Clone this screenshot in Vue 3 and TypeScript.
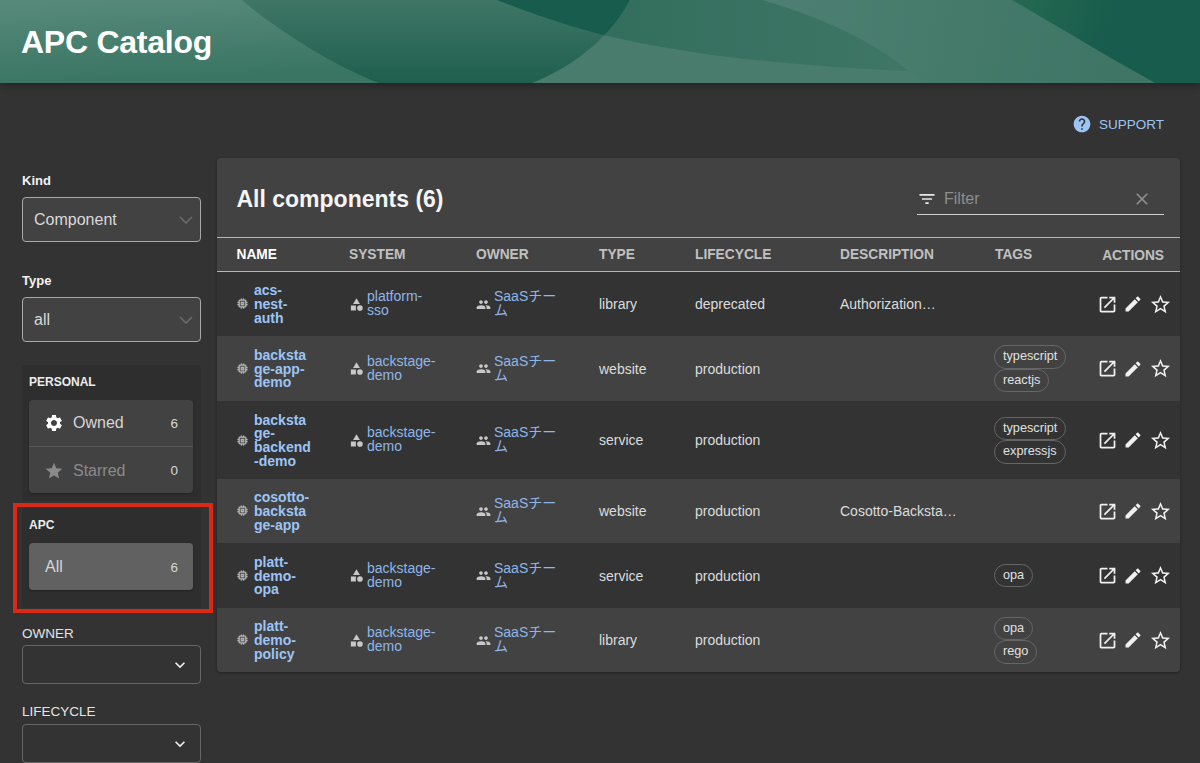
<script setup lang="ts">
const icons = {
  help: 'M12 2C6.48 2 2 6.48 2 12s4.48 10 10 10 10-4.48 10-10S17.52 2 12 2zm1 17h-2v-2h2v2zm2.07-7.75l-.9.92C13.45 12.9 13 13.5 13 15h-2v-.5c0-1.1.45-2.1 1.17-2.83l1.24-1.26c.37-.36.59-.86.59-1.41 0-1.1-.9-2-2-2s-2 .9-2 2H8c0-2.21 1.79-4 4-4s4 1.79 4 4c0 .88-.36 1.68-.93 2.25z',
  filter: 'M10 18h4v-2h-4v2zM3 6v2h18V6H3zm3 7h12v-2H6v2z',
  clear: 'M19 6.41L17.59 5 12 10.59 6.41 5 5 6.41 10.59 12 5 17.59 6.41 19 12 13.41 17.59 19 19 17.59 13.41 12z',
  gear: 'M19.14 12.94c.04-.3.06-.61.06-.94 0-.32-.02-.64-.07-.94l2.03-1.58c.18-.14.23-.41.12-.61l-1.92-3.32c-.12-.22-.37-.29-.59-.22l-2.39.96c-.5-.38-1.03-.7-1.62-.94l-.36-2.54c-.04-.24-.24-.41-.48-.41h-3.84c-.24 0-.43.17-.47.41l-.36 2.54c-.59.24-1.13.57-1.62.94l-2.39-.96c-.22-.08-.47 0-.59.22L2.74 8.87c-.12.21-.08.47.12.61l2.03 1.58c-.05.3-.09.63-.09.94s.02.64.07.94l-2.03 1.58c-.18.14-.23.41-.12.61l1.92 3.32c.12.22.37.29.59.22l2.39-.96c.5.38 1.03.7 1.62.94l.36 2.54c.05.24.24.41.48.41h3.84c.24 0 .44-.17.47-.41l.36-2.54c.59-.24 1.13-.56 1.62-.94l2.39.96c.22.08.47 0 .59-.22l1.92-3.32c.12-.22.07-.47-.12-.61l-2.01-1.58zM12 15.6c-1.98 0-3.6-1.62-3.6-3.6s1.62-3.6 3.6-3.6 3.6 1.62 3.6 3.6-1.62 3.6-3.6 3.6z',
  star: 'M12 17.27L18.18 21l-1.64-7.03L22 9.24l-7.19-.61L12 2 9.19 8.63 2 9.24l5.46 4.73L5.82 21z',
  starBorder: 'M22 9.24l-7.19-.62L12 2 9.19 8.63 2 9.24l5.46 4.73L5.82 21 12 17.27 18.18 21l-1.63-7.03L22 9.24zM12 15.4l-3.76 2.27 1-4.28-3.32-2.88 4.38-.38L12 6.1l1.71 4.04 4.38.38-3.32 2.88 1 4.28L12 15.4z',
  open: 'M19 19H5V5h7V3H5c-1.11 0-2 .9-2 2v14c0 1.1.89 2 2 2h14c1.1 0 2-.9 2-2v-7h-2v7zM14 3v2h3.59l-9.83 9.83 1.41 1.41L19 6.41V10h2V3h-7z',
  edit: 'M3 17.25V21h3.75L17.81 9.94l-3.75-3.75L3 17.25zM20.71 7.04c.39-.39.39-1.02 0-1.41l-2.34-2.34c-.39-.39-1.02-.39-1.41 0l-1.83 1.83 3.75 3.75 1.83-1.83z',
  chip: 'M15 9H9v6h6V9zm-2 4h-2v-2h2v2zm8-2V9h-2V7c0-1.1-.9-2-2-2h-2V3h-2v2h-2V3H9v2H7c-1.1 0-2 .9-2 2v2H3v2h2v2H3v2h2v2c0 1.1.9 2 2 2h2v2h2v-2h2v2h2v-2h2c1.1 0 2-.9 2-2v-2h2v-2h-2v-2h2zm-4 6H7V7h10v10z',
  category: 'M12 2l-5.5 9h11zM17.5 13a4.5 4.5 0 1 0 0 9 4.5 4.5 0 0 0 0-9zM3 13.5h8v8H3z',
  group: 'M16 11c1.66 0 2.99-1.34 2.99-3S17.66 5 16 5c-1.66 0-3 1.34-3 3s1.34 3 3 3zm-8 0c1.66 0 2.99-1.34 2.99-3S9.66 5 8 5C6.34 5 5 6.34 5 8s1.34 3 3 3zm0 2c-2.33 0-7 1.17-7 3.5V19h14v-2.5c0-2.33-4.67-3.5-7-3.5zm8 0c-.29 0-.62.02-.97.05 1.16.84 1.97 1.97 1.97 3.45V19h6v-2.5c0-2.33-4.67-3.5-7-3.5z',
  chevron: 'M16.59 8.59L12 13.17 7.41 8.59 6 10l6 6 6-6z',
}

interface Row {
  name: string
  system: string
  type: string
  lifecycle: string
  description: string
  tags: string[]
  height: number
}

const rows: Row[] = [
  { name: 'acs-nest-auth', system: 'platform-sso', type: 'library', lifecycle: 'deprecated', description: 'Authorization…', tags: [], height: 64 },
  { name: 'backstage-app-demo', system: 'backstage-demo', type: 'website', lifecycle: 'production', description: '', tags: ['typescript', 'reactjs'], height: 65 },
  { name: 'backstage-backend-demo', system: 'backstage-demo', type: 'service', lifecycle: 'production', description: '', tags: ['typescript', 'expressjs'], height: 78 },
  { name: 'cosotto-backstage-app', system: '', type: 'website', lifecycle: 'production', description: 'Cosotto-Backsta…', tags: [], height: 64 },
  { name: 'platt-demo-opa', system: 'backstage-demo', type: 'service', lifecycle: 'production', description: '', tags: ['opa'], height: 65 },
  { name: 'platt-demo-policy', system: 'backstage-demo', type: 'library', lifecycle: 'production', description: '', tags: ['opa', 'rego'], height: 64 },
]
const heads = ['Name', 'System', 'Owner', 'Type', 'Lifecycle', 'Description', 'Tags']
</script>

<template>
  <div class="page">
    <header class="hero">
      <svg class="hero-art" viewBox="0 0 1200 83" preserveAspectRatio="none" aria-hidden="true">
        <defs>
          <linearGradient id="gBase" gradientUnits="userSpaceOnUse" x1="1012" y1="0" x2="1110" y2="30">
            <stop offset="0" stop-color="#266952" />
            <stop offset="1" stop-color="#175c4c" />
          </linearGradient>
          <linearGradient id="gA" x1="0" y1="0" x2="0.2" y2="1">
            <stop offset="0" stop-color="#588a7c" />
            <stop offset="1" stop-color="#3a7563" />
          </linearGradient>
          <linearGradient id="gB" x1="0" y1="0" x2="0" y2="1">
            <stop offset="0" stop-color="#3f7666" />
            <stop offset="1" stop-color="#1f5f4e" />
          </linearGradient>
          <linearGradient id="gE" x1="0" y1="0" x2="1" y2="0">
            <stop offset="0" stop-color="#336e5d" />
            <stop offset="1" stop-color="#3f7666" />
          </linearGradient>
          <linearGradient id="gF" gradientUnits="userSpaceOnUse" x1="800" y1="0" x2="1120" y2="60">
            <stop offset="0" stop-color="#4c7f71" />
            <stop offset="1" stop-color="#3e7565" />
          </linearGradient>
        </defs>
        <rect width="1200" height="83" fill="url(#gBase)" />
        <path d="M0 0H1012C1060 28 1110 58 1155 83H0Z" fill="url(#gF)" />
        <path d="M532 83C575 66 611 36 630 0H762C820 17 880 42 922 83Z" fill="#4a7c6e" />
        <path d="M630 0H762C814.2 15.3 868 37.1 908.9 71.2C800 66 695 57 604.2 35.3C614.6 24.5 623.4 12.6 630 0Z" fill="url(#gE)" />
        <path d="M241.6 0H630C611 36 575 66 532 83H378C320 60 268 22 241.6 0Z" fill="url(#gB)" />
        <path d="M497 0H630C623.4 12.6 614.6 24.5 604.2 35.3C565 25 530 13 497 0Z" fill="#175c4c" />
        <path d="M0 0H241.6C268 22 320 60 378 83H0Z" fill="url(#gA)" />
      </svg>
      <h1 class="title">APC Catalog</h1>
    </header>

    <div class="support-row">
      <a class="support">
        <svg class="support-icon" viewBox="0 0 24 24"><path :d="icons.help" /></svg>
        SUPPORT
      </a>
    </div>

    <div class="content">
      <aside class="sidebar">
        <label class="field-label">Kind</label>
        <div class="select">
          <span>Component</span>
          <svg class="caret" viewBox="0 0 24 24"><path d="M6 9l6 6 6-6" /></svg>
        </div>
        <label class="field-label type-label">Type</label>
        <div class="select">
          <span>all</span>
          <svg class="caret" viewBox="0 0 24 24"><path d="M6 9l6 6 6-6" /></svg>
        </div>

        <section class="menu-card personal">
          <h2 class="menu-title">PERSONAL</h2>
          <div class="menu-group">
            <div class="menu-item">
              <svg class="menu-icon" viewBox="0 0 24 24"><path :d="icons.gear" /></svg>
              <span class="menu-text">Owned</span>
              <span class="count">6</span>
            </div>
            <div class="menu-item divided muted">
              <svg class="menu-icon" viewBox="0 0 24 24"><path :d="icons.star" /></svg>
              <span class="menu-text">Starred</span>
              <span class="count">0</span>
            </div>
          </div>
        </section>

        <section class="menu-card apc">
          <h2 class="menu-title">APC</h2>
          <div class="menu-group selected">
            <div class="menu-item">
              <span class="menu-text">All</span>
              <span class="count">6</span>
            </div>
          </div>
          <div class="highlight"></div>
        </section>

        <label class="filter-label owner-label">OWNER</label>
        <div class="small-select">
          <svg viewBox="0 0 24 24"><path :d="icons.chevron" /></svg>
        </div>
        <label class="filter-label lifecycle-label">LIFECYCLE</label>
        <div class="small-select">
          <svg viewBox="0 0 24 24"><path :d="icons.chevron" /></svg>
        </div>
      </aside>

      <main class="card">
        <div class="toolbar">
          <h2 class="card-title">All components (6)</h2>
          <div class="filter">
            <svg class="filter-icon" viewBox="0 0 24 24"><path :d="icons.filter" /></svg>
            <span class="filter-text">Filter</span>
            <svg class="clear-icon" viewBox="0 0 24 24"><path :d="icons.clear" /></svg>
          </div>
        </div>
        <table class="table">
          <colgroup>
            <col class="c-name" /><col class="c-system" /><col class="c-owner" /><col class="c-type" />
            <col class="c-life" /><col class="c-desc" /><col class="c-tags" /><col class="c-actions" />
          </colgroup>
          <thead>
            <tr>
              <th v-for="(h, i) in heads" :key="h" :class="{ first: i === 0 }">{{ h }}</th>
              <th class="actions-head">Actions</th>
            </tr>
          </thead>
          <tbody>
            <tr v-for="r in rows" :key="r.name" :style="{ height: r.height + 'px' }">
              <td class="name-cell">
                <div class="entity">
                  <svg class="entity-icon chip" viewBox="0 0 24 24"><path :d="icons.chip" /></svg>
                  <a class="name-link">{{ r.name }}</a>
                </div>
              </td>
              <td>
                <div v-if="r.system" class="entity">
                  <svg class="entity-icon large" viewBox="0 0 24 24"><path :d="icons.category" /></svg>
                  <a class="link">{{ r.system }}</a>
                </div>
              </td>
              <td>
                <div class="entity">
                  <svg class="entity-icon large" viewBox="0 0 24 24"><path :d="icons.group" /></svg>
                  <a class="link owner-link">SaaSチーム</a>
                </div>
              </td>
              <td>{{ r.type }}</td>
              <td>{{ r.lifecycle }}</td>
              <td>{{ r.description }}</td>
              <td class="tags-cell">
                <span v-for="t in r.tags" :key="t" class="tag">{{ t }}</span>
              </td>
              <td class="actions">
                <svg class="open" viewBox="0 0 24 24"><path :d="icons.open" /></svg>
                <svg viewBox="0 0 24 24"><path :d="icons.edit" /></svg>
                <svg class="star" viewBox="0 0 24 24"><path :d="icons.starBorder" /></svg>
              </td>
            </tr>
          </tbody>
        </table>
      </main>
    </div>
  </div>
</template>

<style>
html, body { margin: 0; background: #333; }
</style>

<style scoped>
.page {
  height: 763px;
  overflow: hidden;
  background: #333;
  color: #fff;
  font-family: "Liberation Sans", "Noto Sans CJK JP", sans-serif;
  -webkit-font-smoothing: antialiased;
}
.hero {
  position: relative;
  height: 83px;
  display: flex;
  align-items: center;
  padding-left: 21px;
  box-sizing: border-box;
  box-shadow: 0 2px 8px rgba(0, 0, 0, 0.35);
}
.hero-art { position: absolute; inset: 0; width: 100%; height: 100%; display: block; }
.title { position: relative; margin: 0; font-size: 32px; line-height: 1; font-weight: 700; letter-spacing: -0.25px; }
.support-row { display: flex; justify-content: flex-end; padding: 32px 36px 0 0; height: 43px; box-sizing: content-box; }
.support { display: flex; align-items: center; gap: 7px; height: 18px; color: #9cc4f5; font-size: 13.5px; }
.support-icon { width: 20px; height: 20px; fill: #9cc4f5; }
.content { display: flex; gap: 16px; padding-left: 22px; padding-right: 20px; }
.sidebar { width: 179px; flex: none; padding-top: 15px; }
.field-label { display: block; height: 16px; font-size: 13px; line-height: 16px; font-weight: 700; margin-bottom: 8px; color: #f2f2f2; }
.type-label { margin-top: 31px; }
.select {
  height: 45px;
  box-sizing: border-box;
  border: 1px solid #a8a8a8;
  border-radius: 4px;
  background: #424242;
  display: flex;
  align-items: center;
  justify-content: space-between;
  padding: 1px 2px 0 11px;
  font-size: 16px;
  color: #d9d9d9;
}
.caret { width: 24px; height: 24px; fill: none; stroke: #6a6a6a; stroke-width: 1.6; }
.menu-card { position: relative; background: #2e2e2e; border-radius: 4px; padding: 9px 8px 8px 7px; box-sizing: border-box; }
.personal { margin-top: 23px; height: 136px; }
.apc { margin-top: 7px; height: 100px; }
.menu-title { margin: 0; height: 16px; line-height: 16px; font-size: 12px; font-weight: 700; color: #ececec; }
.menu-group { margin-top: 10px; background: #424242; border-radius: 4px; box-shadow: 0 1px 2px rgba(0, 0, 0, 0.25); }
.menu-group.selected { background: #616161; }
.menu-item { display: flex; align-items: center; height: 46px; box-sizing: border-box; padding: 0 15px 0 16px; font-size: 16px; color: #d6d6d6; }
.selected .menu-item { height: 47px; padding-top: 1px; }
.divided { border-top: 1px solid #555; height: 47px; padding-top: 1px; }
.muted { color: #8a8a8a; }
.menu-icon { width: 20px; height: 20px; margin-right: 9px; margin-left: -1px; fill: #fff; }
.muted .menu-icon { fill: #8a8a8a; }
.menu-text { flex: 1; }
.count { font-size: 13.5px; color: #d6d6d6; }
.highlight {
  position: absolute;
  left: -9.5px;
  right: -11.5px;
  top: -5.5px;
  bottom: -4.5px;
  border: 4.5px solid #d92a17;
  pointer-events: none;
}
.filter-label { display: block; height: 16px; line-height: 16px; font-size: 13.5px; color: #e4e4e4; }
.owner-label { margin-top: 18px; margin-bottom: 3px; }
.lifecycle-label { margin-top: 20px; margin-bottom: 4px; }
.small-select {
  height: 39px;
  box-sizing: border-box;
  border: 1px solid #666;
  border-radius: 4px;
  display: flex;
  align-items: center;
  justify-content: flex-end;
  padding-right: 10px;
}
.small-select svg { width: 20px; height: 20px; fill: #f0f0f0; }
.card { flex: 1; min-width: 0; height: 514px; background: #424242; border-radius: 4px; box-shadow: 0 1px 3px rgba(0, 0, 0, 0.35); overflow: hidden; }
.toolbar { height: 79px; display: flex; align-items: center; justify-content: space-between; padding: 0 16px 0 19.5px; box-sizing: border-box; }
.card-title { margin: 3px 0 0; font-size: 23px; font-weight: 700; color: #f5f5f5; }
.filter { width: 247px; height: 31px; margin-top: 4px; display: flex; align-items: center; border-bottom: 1px solid #cfcfcf; box-sizing: border-box; }
.filter-icon { width: 20px; height: 20px; fill: #e8e8e8; margin-right: 7px; }
.filter-text { flex: 1; font-size: 16px; color: #8d8d8d; }
.clear-icon { width: 20px; height: 20px; fill: #8d8d8d; margin-right: 12px; }
.table { width: 963px; table-layout: fixed; border-collapse: separate; border-spacing: 0; font-size: 14px; }
.c-name { width: 116px; }
.c-system { width: 127px; }
.c-owner { width: 123px; }
.c-type { width: 96px; }
.c-life { width: 145px; }
.c-desc { width: 155px; }
.c-tags { width: 107px; }
.c-actions { width: 94px; }
th {
  height: 35px;
  padding: 0 0 1px 16px;
  box-sizing: border-box;
  text-align: left;
  font-size: 13.75px;
  font-weight: 700;
  text-transform: uppercase;
  color: #c0c0c0;
  border-top: 1px solid #b5b5b5;
  border-bottom: 1px solid #b5b5b5;
  white-space: nowrap;
}
th.first { padding-left: 19.5px; color: #fff; }
th.actions-head { padding: 2px 16px 0 0; text-align: right; }
tbody tr:nth-child(odd) { background: #333; }
td { padding: 0 16px; color: #dcdcdc; vertical-align: middle; box-sizing: border-box; }
td.name-cell { padding: 0 16px 0 20px; }
.entity { display: flex; align-items: center; }
.entity-icon { flex: none; width: 13px; height: 13px; margin: 0 5px 0 -1px; fill: #b5b5b5; }
.entity-icon.chip { stroke: #b5b5b5; stroke-width: 0.7; }
.entity-icon.large { width: 15px; height: 15px; margin: 0 3px 0 0; fill: #c8c8c8; }
.name-link { font-weight: 700; width: 58px; line-height: 13.7px; padding-top: 2px; font-size: 14px; color: #9cc4f5; overflow-wrap: anywhere; }
.link { line-height: 13.7px; font-size: 14px; color: #8fb6e8; width: 72px; }
.owner-link { width: 66px; }
.tags-cell { padding: 0 0 0 15px; }
.tag {
  display: table;
  height: 23.5px;
  line-height: 21.5px;
  box-sizing: border-box;
  border: 1px solid #666;
  border-radius: 12px;
  padding: 0 8px;
  font-size: 12.7px;
  color: #e0e0e0;
  margin: 0;
}
.actions { padding: 0 8.5px 0 0; white-space: nowrap; text-align: right; font-size: 0; }
.actions svg { width: 20px; height: 20px; fill: #f0f0f0; margin-left: 5px; vertical-align: middle; }
.actions svg.open { width: 21px; height: 21px; }
.actions svg.star { width: 23px; height: 23px; margin-left: 6px; }
</style>
